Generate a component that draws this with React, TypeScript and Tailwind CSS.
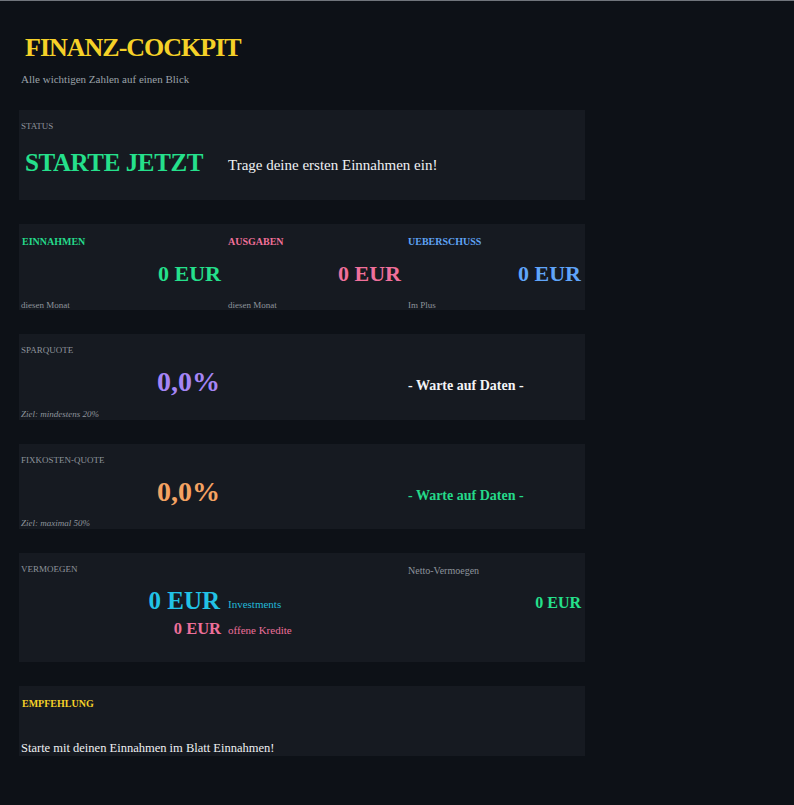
import React from 'react';

const serif = "font-['Liberation_Serif','DejaVu_Serif',serif]";

const Label: React.FC<{ children: React.ReactNode; className?: string }> = ({ children, className = '' }) => (
  <span className={`text-[9px] text-[#8e949c] ${className}`}>{children}</span>
);

const App: React.FC = () => {
  return (
    <div className={`min-h-screen w-full bg-[#0d1117] border-t border-[#70757c] ${serif}`}>
      <div className="w-[566px] ml-[19px] flex flex-col">
        {/* Header */}
        <h1 className="mt-[31px] ml-[6px] leading-[32px] text-[26px] font-bold tracking-[-1px] text-[#f5d128]">
          FINANZ-COCKPIT
        </h1>
        <p className="mt-[8px] ml-[2px] leading-[14px] text-[11px] text-[#9ba1a9]">
          Alle wichtigen Zahlen auf einen Blick
        </p>

        <div className="mt-[24px] flex flex-col gap-6">
          {/* Status */}
          <section className="h-[90px] bg-[#161a21] flex flex-col">
            <div className="h-[34px] flex items-center pl-[2px]">
              <Label>STATUS</Label>
            </div>
            <div className="h-[36px] grid grid-cols-[206px_180px_180px] items-center">
              <span className="pl-[6px] text-[25px] font-bold tracking-[-0.4px] text-[#25e08c] leading-none">
                STARTE JETZT
              </span>
              <span className="col-span-2 pl-[3px] pt-[6px] text-[15px] text-[#eef0f2] whitespace-nowrap">
                Trage deine ersten Einnahmen ein!
              </span>
            </div>
          </section>

          {/* Einnahmen / Ausgaben / Ueberschuss */}
          <section className="h-[86px] bg-[#161a21] grid grid-cols-[206px_180px_180px] grid-rows-[34px_30px_22px]">
            <div className="flex items-center pl-[3px] text-[10px] font-bold text-[#25d98a]">EINNAHMEN</div>
            <div className="flex items-center pl-[3px] text-[10px] font-bold text-[#ef7099]">AUSGABEN</div>
            <div className="flex items-center pl-[3px] text-[10px] font-bold text-[#5fa3f5]">UEBERSCHUSS</div>
            <div className="flex items-center justify-end pr-[4px] text-[22px] font-bold text-[#25e08c]">0 EUR</div>
            <div className="flex items-center justify-end pr-[4px] text-[22px] font-bold text-[#f0709b]">0 EUR</div>
            <div className="flex items-center justify-end pr-[4px] text-[22px] font-bold text-[#60a5fa]">0 EUR</div>
            <div className="flex items-end pl-[2px]"><Label className="text-[9.4px] leading-[10px]">diesen Monat</Label></div>
            <div className="flex items-end pl-[3px]"><Label className="text-[9.4px] leading-[10px]">diesen Monat</Label></div>
            <div className="flex items-end pl-[3px]"><Label className="text-[9.4px] leading-[10px]">Im Plus</Label></div>
          </section>

          {/* Sparquote */}
          <section className="h-[86px] bg-[#161a21] grid grid-cols-[206px_180px_180px] grid-rows-[34px_28px_24px]">
            <div className="col-span-3 flex items-center pl-[2px]"><Label>SPARQUOTE</Label></div>
            <div className="flex items-center justify-end pr-[5px] text-[28px] font-bold text-[#a585f5] leading-none">0,0%</div>
            <div />
            <div className="flex items-center pl-[3px] pt-[6px] text-[14px] font-bold text-[#f3f4f6] whitespace-nowrap">- Warte auf Daten -</div>
            <div className="col-span-3 flex items-end pl-[2px]">
              <Label className="italic leading-[12px]">Ziel: mindestens 20%</Label>
            </div>
          </section>

          {/* Fixkosten */}
          <section className="h-[85px] bg-[#161a21] grid grid-cols-[206px_180px_180px] grid-rows-[34px_28px_23px]">
            <div className="col-span-3 flex items-center pl-[2px]"><Label>FIXKOSTEN-QUOTE</Label></div>
            <div className="flex items-center justify-end pr-[5px] text-[28px] font-bold text-[#f4a262] leading-none">0,0%</div>
            <div />
            <div className="flex items-center pl-[3px] pt-[6px] text-[14px] font-bold text-[#25d98a] whitespace-nowrap">- Warte auf Daten -</div>
            <div className="col-span-3 flex items-end pl-[2px]">
              <Label className="italic leading-[12px]">Ziel: maximal 50%</Label>
            </div>
          </section>

          {/* Vermoegen */}
          <section className="h-[109px] bg-[#161a21] grid grid-cols-[206px_180px_180px] grid-rows-[34px_26px_32px_17px]">
            <div className="col-span-2 flex items-center pl-[2px]"><Label>VERMOEGEN</Label></div>
            <div className="flex items-center pl-[3px]"><Label className="text-[10px]">Netto-Vermoegen</Label></div>
            <div className="flex items-center justify-end pr-[5px] text-[25px] font-bold text-[#22c3e6] leading-none">0 EUR</div>
            <div className="flex items-center pl-[3px] pt-[8px] text-[11px] text-[#22b8d8]">Investments</div>
            <div className="flex items-center justify-end pr-[4px] pt-[6px] text-[16px] font-bold text-[#25e08c]">0 EUR</div>
            <div className="flex items-center justify-end pr-[4px] text-[16.5px] font-bold text-[#ec6f99]">0 EUR</div>
            <div className="flex items-center pl-[3px] pt-[2px] text-[11px] text-[#ec6f99]">offene Kredite</div>
            <div />
          </section>

          {/* Empfehlung */}
          <section className="h-[70px] bg-[#161a21] flex flex-col">
            <div className="h-[34px] flex items-center pl-[3px] text-[10px] font-bold text-[#f5d128]">EMPFEHLUNG</div>
            <div className="flex-1 flex items-end pl-[2px] leading-[15px] text-[12.5px] text-[#eef0f2]">
              Starte mit deinen Einnahmen im Blatt Einnahmen!
            </div>
          </section>
        </div>
      </div>
    </div>
  );
};

export default App;
